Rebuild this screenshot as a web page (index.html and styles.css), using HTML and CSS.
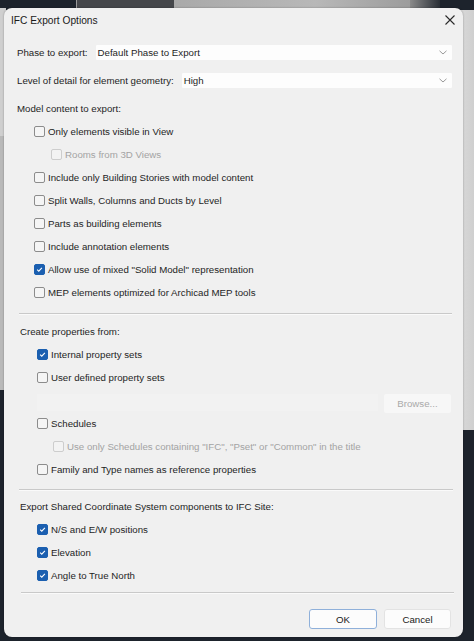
FILE: index.html
```html
<!DOCTYPE html>
<html lang="en">
<head>
<meta charset="utf-8">
<title>IFC Export Options</title>
<link rel="stylesheet" href="styles.css">
</head>
<body>
<div class="backdrop">
  <div class="bg-top-a"></div>
  <div class="bg-top-b"></div>
  <div class="bg-top-c"></div>
  <div class="bg-left-a"></div>
  <div class="bg-left-b"></div>
  <div class="bg-right-a"></div>
</div>

<div class="dialog">
  <div class="titlebar">
    <span class="title">IFC Export Options</span>
    <svg class="close" width="10" height="10" viewBox="0 0 10 10"><path d="M0.5 0.5 L9.5 9.5 M9.5 0.5 L0.5 9.5" stroke="#2a2a2a" stroke-width="1.1" fill="none"/></svg>
  </div>

  <div class="content">
    <div class="field-row first">
      <span class="field-label">Phase to export:</span>
      <div class="select"><span>Default Phase to Export</span><svg class="chev" width="8" height="5" viewBox="0 0 8 5"><path d="M0.5 0.8 L4 4 L7.5 0.8" stroke="#9a9a9a" stroke-width="1" fill="none"/></svg></div>
    </div>
    <div class="field-row">
      <span class="field-label">Level of detail for element geometry:</span>
      <div class="select"><span>High</span><svg class="chev" width="8" height="5" viewBox="0 0 8 5"><path d="M0.5 0.8 L4 4 L7.5 0.8" stroke="#9a9a9a" stroke-width="1" fill="none"/></svg></div>
    </div>

    <div class="section s1">
      <div class="row label-row">Model content to export:</div>
      <div class="row opt"><span class="cb"></span><span>Only elements visible in View</span></div>
      <div class="row opt sub disabled"><span class="cb"></span><span>Rooms from 3D Views</span></div>
      <div class="row opt"><span class="cb"></span><span>Include only Building Stories with model content</span></div>
      <div class="row opt"><span class="cb"></span><span>Split Walls, Columns and Ducts by Level</span></div>
      <div class="row opt"><span class="cb"></span><span>Parts as building elements</span></div>
      <div class="row opt"><span class="cb"></span><span>Include annotation elements</span></div>
      <div class="row opt"><span class="cb on"><svg viewBox="0 0 11 11" width="11" height="11"><path d="M2.6 5.6 L4.6 7.5 L8.4 3.4" stroke="#fff" stroke-width="1.3" fill="none"/></svg></span><span>Allow use of mixed "Solid Model" representation</span></div>
      <div class="row opt"><span class="cb"></span><span>MEP elements optimized for Archicad MEP tools</span></div>
    </div>

    <div class="sep sep1"></div>

    <div class="section s2">
      <div class="row label-row">Create properties from:</div>
      <div class="row opt"><span class="cb on"><svg viewBox="0 0 11 11" width="11" height="11"><path d="M2.6 5.6 L4.6 7.5 L8.4 3.4" stroke="#fff" stroke-width="1.3" fill="none"/></svg></span><span>Internal property sets</span></div>
      <div class="row opt"><span class="cb"></span><span>User defined property sets</span></div>
      <div class="row browse-row">
        <div class="path-input"></div>
        <div class="browse-btn">Browse...</div>
      </div>
      <div class="row opt"><span class="cb"></span><span>Schedules</span></div>
      <div class="row opt sub2 disabled"><span class="cb"></span><span>Use only Schedules containing "IFC", "Pset" or "Common" in the title</span></div>
      <div class="row opt"><span class="cb"></span><span>Family and Type names as reference properties</span></div>
    </div>

    <div class="sep sep2"></div>

    <div class="section s2">
      <div class="row label-row">Export Shared Coordinate System components to IFC Site:</div>
      <div class="row opt"><span class="cb on"><svg viewBox="0 0 11 11" width="11" height="11"><path d="M2.6 5.6 L4.6 7.5 L8.4 3.4" stroke="#fff" stroke-width="1.3" fill="none"/></svg></span><span>N/S and E/W positions</span></div>
      <div class="row opt"><span class="cb on"><svg viewBox="0 0 11 11" width="11" height="11"><path d="M2.6 5.6 L4.6 7.5 L8.4 3.4" stroke="#fff" stroke-width="1.3" fill="none"/></svg></span><span>Elevation</span></div>
      <div class="row opt"><span class="cb on"><svg viewBox="0 0 11 11" width="11" height="11"><path d="M2.6 5.6 L4.6 7.5 L8.4 3.4" stroke="#fff" stroke-width="1.3" fill="none"/></svg></span><span>Angle to True North</span></div>
    </div>

    <div class="sep sep3"></div>

    <div class="buttons">
      <div class="btn ok">OK</div>
      <div class="btn cancel">Cancel</div>
    </div>
  </div>
</div>
</body>
</html>
```

FILE: styles.css
```css
* { box-sizing: border-box; }

html, body {
  margin: 0;
  padding: 0;
}

body {
  width: 474px;
  height: 641px;
  overflow: hidden;
  background: #1d232c;
  font-family: "Liberation Sans", Arial, sans-serif;
  font-size: 9.7px;
  color: #1e1e1e;
  position: relative;
}

/* backdrop pieces behind the dialog */
.backdrop div { position: absolute; }
.bg-top-a { left: 76px; top: 0; width: 98px; height: 10px; background: #45474b; border-left: 1px solid #9a9a9a; }
.bg-top-b { left: 174px; top: 0; width: 236px; height: 10px; background: linear-gradient(90deg, #a9a9a9, #b8b8b8 60%, #9c9c9c); }
.bg-top-c { left: 410px; top: 0; width: 30px; height: 10px; background: linear-gradient(90deg, #8a8a8a, #2a2f36); }
.bg-left-a { left: 0; top: 8px; width: 6px; height: 128px; background: #cfcfcf; }
.bg-left-b { left: 0; top: 136px; width: 6px; height: 254px; background: #b9b9b9; }
.bg-right-a { left: 460px; top: 10px; width: 14px; height: 420px; background: linear-gradient(90deg, #d9d9d9, #cfcfcf); }

.dialog {
  position: relative;
  margin: 8px 0 0 4px;
  width: 459px;
  height: 629px;
  background: #f0f0f0;
  border-radius: 8px;
  box-shadow: 0 0 2px rgba(0,0,0,0.35);
  overflow: hidden;
}

.titlebar {
  height: 24px;
  display: flex;
  align-items: center;
  justify-content: space-between;
  padding: 0 8px 0 7px;
}

.title {
  font-size: 10.2px;
  color: #1a1a1a;
  padding-top: 1px;
}

.close { display: block; }

.content {
  padding: 0 11px 0 13px;
}

.field-row {
  display: flex;
  align-items: center;
  height: 15px;
  margin-top: 13px;
  gap: 8px;
}

.field-label { white-space: nowrap; }

.select {
  flex: 1;
  height: 15px;
  background: #fdfdfd;
  display: flex;
  align-items: center;
  justify-content: space-between;
  padding: 0 5px 0 2px;
  border-radius: 1px;
}

.chev { display: block; }

.s1 { margin-top: 9px; }

.s2 { padding-left: 3px; }

.row {
  height: 23px;
  display: flex;
  align-items: center;
  white-space: nowrap;
}

.opt { padding-left: 17px; gap: 2px; }
.opt.sub { padding-left: 34px; }
.opt.sub2 { padding-left: 33px; }

.cb {
  width: 11px;
  height: 11px;
  flex: none;
  border: 1px solid #8c8c8c;
  border-radius: 2px;
  background: #f5f5f5;
  display: flex;
  align-items: center;
  justify-content: center;
  margin-right: 1px;
}

.cb svg { display: block; }

.cb.on {
  background: #1b5fb0;
  border-color: #1b5fb0;
}

.disabled { color: #a3a3a3; }
.disabled .cb { border-color: #cdcdcd; background: #f3f3f3; }

.sep {
  height: 2px;
  border-top: 1px solid #c9c9c9;
  border-bottom: 1px solid #fafafa;
}

.sep1 { margin: 9px 0 5px 2px; width: 433px; }
.sep2 { margin: 8px 0 4px 2px; width: 434px; }
.sep3 { margin: 5px 0 0 4px; width: 433px; }

.browse-row {
  padding-left: 17px;
  gap: 6px;
  align-items: flex-end;
}

.path-input {
  width: 341px;
  height: 17px;
  background: #f2f2f2;
  margin-bottom: 1px;
}

.browse-btn {
  width: 67px;
  height: 19px;
  background: #f7f7f7;
  color: #a9a9a9;
  display: flex;
  align-items: center;
  justify-content: center;
  border-radius: 2px;
  margin-bottom: -1px;
}

.buttons {
  display: flex;
  justify-content: flex-end;
  gap: 7px;
  margin-top: 15px;
  padding-right: 1px;
}

.btn {
  width: 68px;
  height: 20px;
  display: flex;
  align-items: center;
  justify-content: center;
  border-radius: 3px;
  background: #fcfcfc;
  border: 1px solid #e3e3e3;
  color: #1a1a1a;
}

.btn.ok { border: 1px solid #8fb0da; }

.btn.cancel { width: 67px; }
```
